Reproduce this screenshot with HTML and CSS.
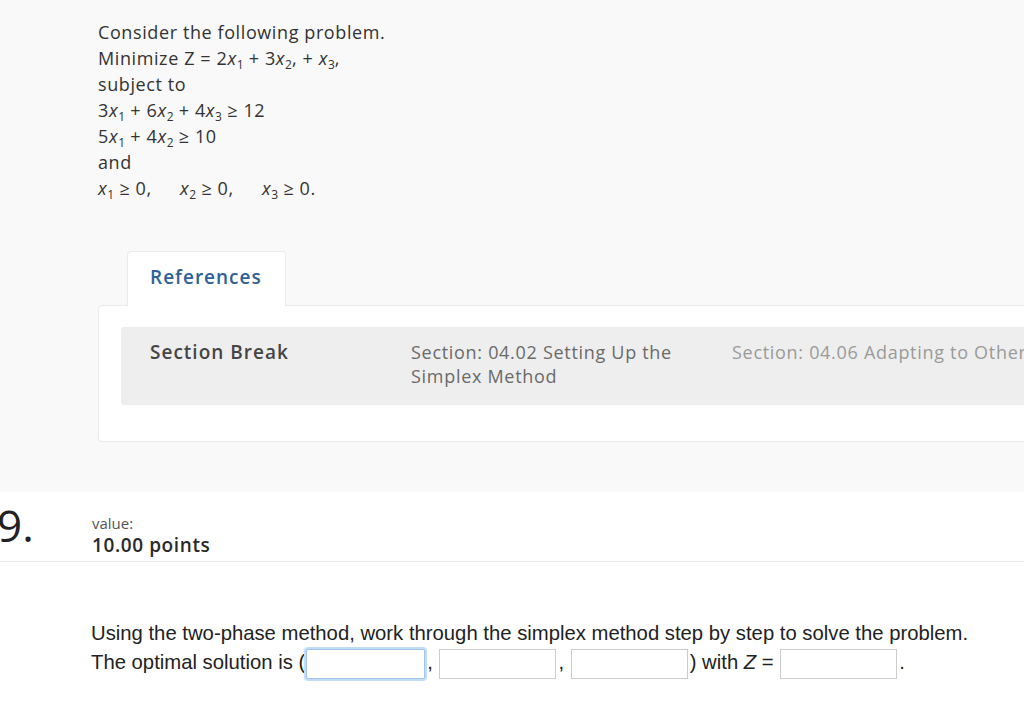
FILE: index.html
```html
<!DOCTYPE html>
<html>
<head>
<meta charset="utf-8">
<link rel="stylesheet" href="styles.css">
</head>
<body>
<div class="page">
  <section class="top">
    <div class="problem">
      <p class="line">Consider the following problem.</p>
      <p class="line">Minimize Z = 2<i>x</i><sub>1</sub> + 3<i>x</i><sub>2</sub>, + <i>x</i><sub>3</sub>,</p>
      <p class="line">subject to</p>
      <p class="line">3<i>x</i><sub>1</sub> + 6<i>x</i><sub>2</sub> + 4<i>x</i><sub>3</sub> ≥ 12</p>
      <p class="line">5<i>x</i><sub>1</sub> + 4<i>x</i><sub>2</sub> ≥ 10</p>
      <p class="line">and</p>
      <p class="line"><i>x</i><sub>1</sub> ≥ 0, <span class="sp"></span><i>x</i><sub>2</sub> ≥ 0, <span class="sp"></span><i>x</i><sub>3</sub> ≥ 0.</p>
    </div>
    <div class="refs">
      <div class="tab">References</div>
      <div class="panel">
        <div class="box">
          <div class="col c1">Section Break</div>
          <div class="col c2">Section: 04.02 Setting Up the Simplex Method</div>
          <div class="col c3">Section: 04.06 Adapting to Other Model Forms</div>
        </div>
      </div>
    </div>
  </section>
  <section class="qhead">
    <div class="qnum">9.</div>
    <div class="qval">
      <div class="vlabel">value:</div>
      <div class="vpts">10.00 points</div>
    </div>
  </section>
  <section class="qbody">
    <p class="qline">Using the two-phase method, work through the simplex method step by step to solve the problem.</p>
    <p class="qline">The optimal solution is (<input class="ans focus" type="text">, <input class="ans" type="text">, <input class="ans" type="text">) with <i>Z</i> = <input class="ans" type="text">.</p>
  </section>
</div>
</body>
</html>
```
FILE: styles.css
```css
html, body {
  margin: 0;
  padding: 0;
  background: #ffffff;
}
.page {
  width: 1024px;
  height: 708px;
  overflow: hidden;
  font-family: "Open Sans", "Lato", sans-serif;
}
.top {
  background: #f9f9f9;
  height: 492px;
  padding: 20px 0 0 98px;
  box-sizing: border-box;
}
.problem {
  color: #333333;
  font-size: 18px;
  letter-spacing: 0.6px;
}
.line {
  margin: 0;
  height: 26px;
  line-height: 24px;
  white-space: nowrap;
}
.line i {
  font-style: italic;
}
.line sub {
  font-size: 12px;
  vertical-align: -4px;
  line-height: 0;
  letter-spacing: 0;
}
.sp {
  display: inline-block;
  width: 23px;
}
.refs {
  margin-top: 49px;
  width: 1000px;
}
.tab {
  margin-left: 29px;
  width: 159px;
  height: 55px;
  box-sizing: border-box;
  background: #ffffff;
  border: 1px solid #ebebeb;
  border-bottom: none;
  border-radius: 4px 4px 0 0;
  color: #2f6196;
  font-weight: 600;
  font-size: 19px;
  letter-spacing: 1px;
  padding-top: 12px;
  padding-left: 22px;
  position: relative;
  z-index: 1;
  margin-bottom: -1px;
}
.panel {
  background: #ffffff;
  border: 1px solid #ebebeb;
  border-radius: 4px 0 0 4px;
  height: 137px;
  box-sizing: border-box;
  padding: 21px 0 0 22px;
}
.box {
  background: #eeeeee;
  border-radius: 3px;
  height: 78px;
  display: flex;
  padding: 13px 0 0 29px;
  box-sizing: border-box;
}
.col {
  font-size: 18px;
  letter-spacing: 0.7px;
  line-height: 24px;
  flex-shrink: 0;
}
.c1 {
  width: 261px;
  font-weight: 600;
  color: #454545;
  font-size: 19px;
  letter-spacing: 1px;
}
.c2 {
  width: 280px;
  margin-right: 41px;
  color: #6a6a6a;
}
.c3 {
  width: 400px;
  color: #9a9a9a;
  white-space: nowrap;
}
.qhead {
  height: 69px;
  border-bottom: 1px solid #e6e6e6;
  display: flex;
  align-items: flex-start;
}
.qnum {
  font-size: 44px;
  color: #222222;
  margin-left: -3px;
  width: 95px;
  line-height: 44px;
  padding-top: 11px;
  flex-shrink: 0;
}
.qval {
  padding-top: 22px;
}
.vlabel {
  font-size: 15px;
  color: #555555;
  line-height: 19px;
}
.vpts {
  font-size: 19px;
  font-weight: 600;
  color: #2a2a2a;
  letter-spacing: 0.6px;
  line-height: 24px;
}
.qbody {
  padding: 57px 0 0 91px;
  font-family: "Liberation Sans", Arial, sans-serif;
  font-size: 20.3px;
  color: #222222;
}
.qline {
  margin: 0;
  line-height: 29px;
  white-space: nowrap;
}
.ans {
  width: 117px;
  height: 30px;
  box-sizing: border-box;
  border: 1px solid #cccccc;
  vertical-align: middle;
  margin: 0 2px 0 1px;
  padding: 0;
  background: #fff;
}
.ans.focus {
  border: 1px solid #9ec6ef;
  box-shadow: 0 0 0 2px #c3dcf7;
  border-radius: 2px;
  width: 119px;
}
```
